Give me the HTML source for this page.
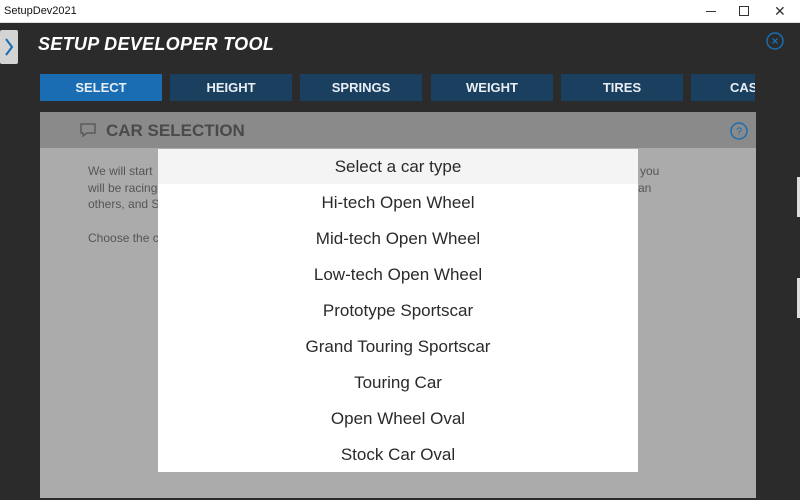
<!DOCTYPE html>
<html><head><style>
*{margin:0;padding:0;box-sizing:border-box}
body{width:800px;height:500px;overflow:hidden;background:#2b2b2b;font-family:"Liberation Sans",sans-serif;position:relative}
.abs{position:absolute}
.tb{left:0;top:0;width:800px;height:23px;background:#fff;border-bottom:1px solid #ddd}
.tb span{position:absolute;left:4px;top:5px;font-size:11px;color:#111}
.tab{top:74px;height:27px;width:122px;background:#1b3f5f;color:#e8eef4;font-weight:bold;font-size:13px;text-align:center;line-height:27px}
.item{left:158px;width:480px;height:36px;text-align:center;line-height:36px;font-size:17px;color:#2a2a2a}
.t{left:88px;font-size:12px;color:#555}
</style></head><body>
<div class="abs tb"><span>SetupDev2021</span>
<div class="abs" style="left:706px;top:11px;width:10px;height:1px;background:#333"></div>
<div class="abs" style="left:739px;top:6px;width:10px;height:10px;border:1px solid #333"></div>
<span style="left:774px;top:3px;font-size:14px;color:#333">✕</span></div>
<div class="abs" style="left:0;top:30px;width:18px;height:34px;background:#d4d4d4;border-radius:2px"></div>
<svg class="abs" style="left:3px;top:36px" width="12" height="22"><path d="M3 3 L9 11 L3 19" stroke="#1a6db3" stroke-width="2" fill="none"/></svg>
<div class="abs" style="left:38px;top:34px;font-size:18px;font-weight:bold;font-style:italic;color:#fff;letter-spacing:0.3px">SETUP DEVELOPER TOOL</div>
<svg class="abs" style="left:766px;top:32px" width="18" height="18"><circle cx="9" cy="9" r="8" stroke="#1a6db3" stroke-width="1.5" fill="none"/><path d="M6.5 6.5L11.5 11.5M11.5 6.5L6.5 11.5" stroke="#1a6db3" stroke-width="1.3"/></svg>
<div class="abs tab" style="left:40px;background:#1a6db3">SELECT</div>
<div class="abs tab" style="left:170px">HEIGHT</div>
<div class="abs tab" style="left:300px">SPRINGS</div>
<div class="abs tab" style="left:431px">WEIGHT</div>
<div class="abs tab" style="left:561px">TIRES</div>
<div class="abs tab" style="left:691px;width:64px;overflow:hidden;text-align:left;padding-left:39px">CAS</div>
<div class="abs" style="left:40px;top:112px;width:716px;height:36px;background:#8a8a8a"></div>
<svg class="abs" style="left:79px;top:122px" width="18" height="16"><path d="M2 2H16V11H8L4 14V11H2Z" stroke="#5a5a5a" stroke-width="1.5" fill="none"/></svg>
<div class="abs" style="left:106px;top:121px;font-size:17px;font-weight:bold;color:#4a4a4a">CAR SELECTION</div>
<svg class="abs" style="left:729px;top:121px" width="20" height="20"><circle cx="10" cy="10" r="8" stroke="#1a6db3" stroke-width="1.5" fill="none"/><text x="10" y="14" font-size="11" text-anchor="middle" fill="#1a6db3" font-family="Liberation Sans">?</text></svg>
<div class="abs" style="left:40px;top:148px;width:716px;height:350px;background:#ababab"></div>
<div class="abs t" style="top:164px">We will start</div>
<div class="abs t" style="top:181px">will be racing</div>
<div class="abs t" style="top:197px">others, and S</div>
<div class="abs t" style="top:231px">Choose the c</div>
<div class="abs t" style="left:640px;top:164px">you</div>
<div class="abs t" style="left:638px;top:181px">an</div>
<div class="abs" style="left:797px;top:177px;width:3px;height:40px;background:#ddd"></div>
<div class="abs" style="left:797px;top:278px;width:3px;height:40px;background:#ddd"></div>
<div class="abs" style="left:158px;top:149px;width:480px;height:323px;background:#fff"></div>
<div class="abs item" style="top:149px;height:35px;background:#f4f4f4">Select a car type</div>
<div class="abs item" style="top:185px">Hi-tech Open Wheel</div>
<div class="abs item" style="top:221px">Mid-tech Open Wheel</div>
<div class="abs item" style="top:257px">Low-tech Open Wheel</div>
<div class="abs item" style="top:293px">Prototype Sportscar</div>
<div class="abs item" style="top:329px">Grand Touring Sportscar</div>
<div class="abs item" style="top:365px">Touring Car</div>
<div class="abs item" style="top:401px">Open Wheel Oval</div>
<div class="abs item" style="top:437px">Stock Car Oval</div>
</body></html>
